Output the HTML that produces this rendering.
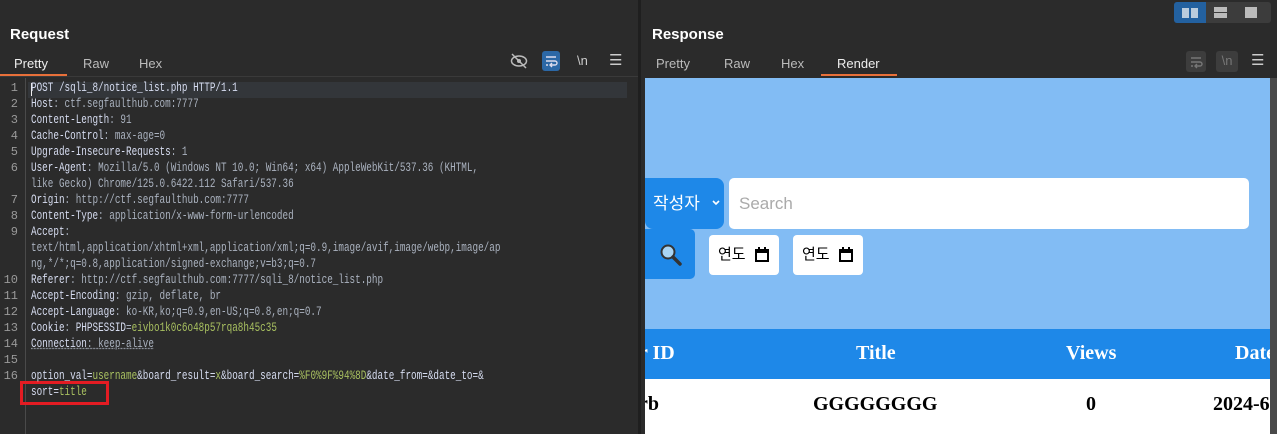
<!DOCTYPE html>
<html><head><meta charset="utf-8"><style>
*{margin:0;padding:0;box-sizing:border-box}
body{width:1277px;height:434px;background:#2b2b2b;position:relative;overflow:hidden;font-family:"Liberation Sans","Noto Sans CJK KR",sans-serif;color:#ddd}
.abs{position:absolute}
.h{font-weight:bold;font-size:15px;color:#fff}
.tab{font-size:13px;color:#bbb;position:absolute;top:56px}
.code{position:absolute;left:0;top:80px;font-family:"Liberation Mono",monospace;font-size:12.5px;line-height:16px}
.ln{position:absolute;left:0;width:18px;text-align:right;color:#9a9a9a;font-size:12px}
.tx{position:absolute;left:31px;white-space:pre;color:#aab2bf;transform:scaleX(0.745);transform-origin:0 0}
.k{color:#d6dcf0}.g{color:#a8c060}
.tb{font-family:'Liberation Serif',serif;font-weight:bold;font-size:20px}
</style></head><body>
<div class="abs" style="left:1174px;top:2px;width:97px;height:21px;background:#3c3c3c;border-radius:3px"></div>
<div class="abs" style="left:1174px;top:2px;width:32px;height:21px;background:#2361a0;border-radius:3px 0 0 3px"></div>
<div class="abs" style="left:1182px;top:8px;width:7px;height:10px;background:#bcd"></div>
<div class="abs" style="left:1191px;top:8px;width:7px;height:10px;background:#bcd"></div>
<div class="abs" style="left:1214px;top:7px;width:13px;height:5px;background:#bbb"></div>
<div class="abs" style="left:1214px;top:13px;width:13px;height:5px;background:#bbb"></div>
<div class="abs" style="left:1245px;top:7px;width:12px;height:11px;background:#bbb"></div>

<div class="abs" style="left:638px;top:0;width:3px;height:434px;background:#1f1f1f"></div>

<div class="abs h" style="left:10px;top:26px">Request</div>
<div class="tab" style="left:14px;color:#eee">Pretty</div>
<div class="tab" style="left:83px">Raw</div>
<div class="tab" style="left:139px">Hex</div>
<div class="abs" style="left:0;top:74px;width:67px;height:2px;background:#e8703a"></div>
<div class="abs" style="left:0;top:76px;width:638px;height:1px;background:#3a3a3a"></div>
<svg class="abs" style="left:509px;top:52px" width="20" height="18"><ellipse cx="10" cy="9" rx="7.5" ry="5" fill="none" stroke="#bbb" stroke-width="1.5"/><circle cx="10" cy="9" r="2" fill="#bbb"/><line x1="3" y1="2" x2="17" y2="16" stroke="#bbb" stroke-width="1.5"/></svg>
<div class="abs" style="left:542px;top:51px;width:18px;height:20px;background:#2c68a6;border-radius:3px"></div>
<svg class="abs" style="left:542px;top:51px" width="18" height="20"><path d="M4 6h10M4 10h9a2 2 0 0 1 0 4H9M4 14h2M10 12l-2 2 2 2" fill="none" stroke="#dde" stroke-width="1.4"/></svg>
<div class="abs" style="left:577px;top:53px;font-size:13px;color:#ccc">\n</div>
<div class="abs" style="left:609px;top:51px;font-size:15px;color:#ccc">☰</div>

<div class="abs" style="left:25px;top:78px;width:1px;height:356px;background:#4a4a4a"></div>
<div class="abs" style="left:28px;top:82px;width:599px;height:16px;background:#33363a"></div>
<div class="abs" style="left:31px;top:83px;width:1px;height:13px;background:#eee"></div>
<div class="abs" style="left:20px;top:381px;width:89px;height:24px;border:3px solid #e31c23"></div>

<div class="code">
<div class="ln" style="top:0">1</div><div class="tx k" style="top:0">POST /sqli_8/notice_list.php HTTP/1.1</div>
<div class="ln" style="top:16px">2</div><div class="tx" style="top:16px"><span class="k">Host</span>: ctf.segfaulthub.com:7777</div>
<div class="ln" style="top:32px">3</div><div class="tx" style="top:32px"><span class="k">Content-Length</span>: 91</div>
<div class="ln" style="top:48px">4</div><div class="tx" style="top:48px"><span class="k">Cache-Control</span>: max-age=0</div>
<div class="ln" style="top:64px">5</div><div class="tx" style="top:64px"><span class="k">Upgrade-Insecure-Requests</span>: 1</div>
<div class="ln" style="top:80px">6</div><div class="tx" style="top:80px"><span class="k">User-Agent</span>: Mozilla/5.0 (Windows NT 10.0; Win64; x64) AppleWebKit/537.36 (KHTML,</div>
<div class="tx" style="top:96px">like Gecko) Chrome/125.0.6422.112 Safari/537.36</div>
<div class="ln" style="top:112px">7</div><div class="tx" style="top:112px"><span class="k">Origin</span>: http://ctf.segfaulthub.com:7777</div>
<div class="ln" style="top:128px">8</div><div class="tx" style="top:128px"><span class="k">Content-Type</span>: application/x-www-form-urlencoded</div>
<div class="ln" style="top:144px">9</div><div class="tx" style="top:144px"><span class="k">Accept</span>:</div>
<div class="tx" style="top:160px">text/html,application/xhtml+xml,application/xml;q=0.9,image/avif,image/webp,image/ap</div>
<div class="tx" style="top:176px">ng,*/*;q=0.8,application/signed-exchange;v=b3;q=0.7</div>
<div class="ln" style="top:192px">10</div><div class="tx" style="top:192px"><span class="k">Referer</span>: http://ctf.segfaulthub.com:7777/sqli_8/notice_list.php</div>
<div class="ln" style="top:208px">11</div><div class="tx" style="top:208px"><span class="k">Accept-Encoding</span>: gzip, deflate, br</div>
<div class="ln" style="top:224px">12</div><div class="tx" style="top:224px"><span class="k">Accept-Language</span>: ko-KR,ko;q=0.9,en-US;q=0.8,en;q=0.7</div>
<div class="ln" style="top:240px">13</div><div class="tx" style="top:240px"><span class="k">Cookie</span>: <span class="k">PHPSESSID</span>=<span class="g">eivbo1k0c6o48p57rqa8h45c35</span></div>
<div class="ln" style="top:256px">14</div><div class="tx" style="top:256px;text-decoration:underline dotted"><span class="k">Connection</span>: keep-alive</div>
<div class="ln" style="top:272px">15</div>
<div class="ln" style="top:288px">16</div><div class="tx k" style="top:288px">option_val=<span class="g">username</span>&amp;board_result=<span class="g">x</span>&amp;board_search=<span class="g">%F0%9F%94%8D</span>&amp;date_from=&amp;date_to=&amp;</div>
<div class="tx k" style="top:304px">sort=<span class="g">title</span></div>
</div>

<div class="abs h" style="left:652px;top:26px">Response</div>
<div class="tab" style="left:656px">Pretty</div>
<div class="tab" style="left:724px">Raw</div>
<div class="tab" style="left:781px">Hex</div>
<div class="tab" style="left:837px;color:#eee">Render</div>
<div class="abs" style="left:821px;top:74px;width:76px;height:2px;background:#e8703a"></div>
<div class="abs" style="left:1186px;top:51px;width:20px;height:21px;background:#3d3d3d;border-radius:3px"></div>
<svg class="abs" style="left:1187px;top:52px" width="18" height="20"><path d="M4 6h10M4 10h9a2 2 0 0 1 0 4H9M4 14h2M10 12l-2 2 2 2" fill="none" stroke="#777" stroke-width="1.4"/></svg>
<div class="abs" style="left:1216px;top:51px;width:22px;height:21px;background:#3d3d3d;border-radius:3px;font-size:13px;color:#777;text-align:center;line-height:20px">\n</div>
<div class="abs" style="left:1251px;top:51px;font-size:15px;color:#ccc">☰</div>

<div class="abs" style="left:645px;top:78px;width:625px;height:356px;background:#82bcf4;overflow:hidden">
  <div class="abs" style="left:0;top:0;width:6px;height:356px;background:#82bcf4"></div>
  <div class="abs" style="left:0;top:100px;width:79px;height:51px;background:#1e88e8;border-radius:0 8px 8px 8px;color:#fff;font-size:17px;line-height:51px;padding-left:8px;white-space:nowrap">작성자</div>
  <svg class="abs" style="left:67px;top:122px" width="8" height="6"><path d="M1 1l3 3 3-3" fill="none" stroke="#fff" stroke-width="1.6"/></svg>
  <div class="abs" style="left:84px;top:100px;width:520px;height:51px;background:#fff;border-radius:5px;color:#aaa;font-size:17px;line-height:51px;padding-left:10px">Search</div>
  <div class="abs" style="left:0;top:151px;width:50px;height:50px;background:#1e88e8;border-radius:0 5px 5px 0"></div>
  <svg class="abs" style="left:14px;top:165px" width="24" height="24"><circle cx="9" cy="9" r="6.5" fill="#a8d4f4" stroke="#333" stroke-width="2"/><line x1="14" y1="14" x2="21" y2="21" stroke="#333" stroke-width="3.5" stroke-linecap="round"/></svg>
  <div class="abs" style="left:64px;top:157px;width:70px;height:40px;background:#fff;border-radius:4px;color:#000;font-size:15px;line-height:40px;padding-left:9px">연도</div>
  <svg class="abs" style="left:110px;top:169px" width="14" height="15"><rect x="1" y="3" width="12" height="11" fill="none" stroke="#000" stroke-width="2"/><rect x="1" y="3" width="12" height="3" fill="#000"/><rect x="3" y="0" width="2" height="3" fill="#000"/><rect x="9" y="0" width="2" height="3" fill="#000"/></svg>
  <div class="abs" style="left:148px;top:157px;width:70px;height:40px;background:#fff;border-radius:4px;color:#000;font-size:15px;line-height:40px;padding-left:9px">연도</div>
  <svg class="abs" style="left:194px;top:169px" width="14" height="15"><rect x="1" y="3" width="12" height="11" fill="none" stroke="#000" stroke-width="2"/><rect x="1" y="3" width="12" height="3" fill="#000"/><rect x="3" y="0" width="2" height="3" fill="#000"/><rect x="9" y="0" width="2" height="3" fill="#000"/></svg>
  <div class="abs tb" style="left:0;top:251px;width:625px;height:50px;background:#1e88e8;color:#fff">
    <span class="abs" style="left:-6px;top:13px">r ID</span>
    <span class="abs" style="left:211px;top:13px">Title</span>
    <span class="abs" style="left:421px;top:13px">Views</span>
    <span class="abs" style="left:590px;top:13px">Date</span>
  </div>
  <div class="abs tb" style="left:0;top:301px;width:625px;height:60px;background:#fff;color:#000">
    <span class="abs" style="left:-6px;top:14px">rb</span>
    <span class="abs" style="left:168px;top:14px">GGGGGGGG</span>
    <span class="abs" style="left:441px;top:14px">0</span>
    <span class="abs" style="left:568px;top:14px">2024-6</span>
  </div>
</div>
<div class="abs" style="left:1270px;top:78px;width:7px;height:356px;background:#4a4a4a"></div>
</body></html>
